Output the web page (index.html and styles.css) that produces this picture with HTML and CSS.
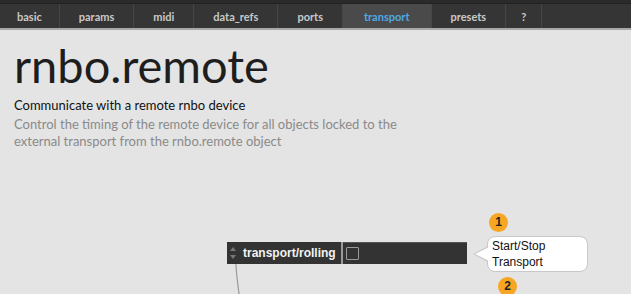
FILE: index.html
```html
<!DOCTYPE html>
<html>
<head>
<meta charset="utf-8">
<link rel="stylesheet" href="styles.css">
</head>
<body>
<div class="topstrip"></div>
<nav class="tabs">
  <div class="tab first">basic</div>
  <div class="tab">params</div>
  <div class="tab">midi</div>
  <div class="tab">data_refs</div>
  <div class="tab">ports</div>
  <div class="tab active">transport</div>
  <div class="tab">presets</div>
  <div class="tab help">?</div>
</nav>
<main class="content">
  <h1 class="title">rnbo.remote</h1>
  <p class="subtitle">Communicate with a remote rnbo device</p>
  <p class="desc">Control the timing of the remote device for all objects locked to the external transport from the rnbo.remote object</p>
  <div class="canvas">
    <svg class="cable" width="40" height="40" viewBox="0 0 40 40"><path d="M10 0 C 10 12, 12 20, 14 40" fill="none" stroke="#9a9a9a" stroke-width="1.2"/></svg>
    <div class="node">
      <div class="msg">
        <svg class="arrows" width="8" height="14" viewBox="0 0 8 14"><path d="M4 1 L7 5 L1 5 Z" fill="#777"/><path d="M4 13 L7 9 L1 9 Z" fill="#777"/></svg>
        <span>transport/rolling</span>
      </div>
      <div class="toggle"><span class="box"></span></div>
    </div>
    <div class="badge b1">1</div>
    <div class="bubble">Start/Stop<br>Transport</div>
    <div class="badge b2">2</div>
  </div>
</main>
</body>
</html>
```
FILE: styles.css
```css
html, body { margin: 0; padding: 0; }
body {
  width: 631px; height: 294px; overflow: hidden;
  background: #e4e4e4;
  font-family: Lato, "Open Sans", sans-serif;
}
.topstrip { height: 3px; background: #2a2a2a; border-bottom: 1px solid #222; }
.tabs {
  display: flex; height: 24px; background: #353535;
  border-bottom: 2px solid #a8a8a8;
}
.tab {
  padding: 0 19px; border-right: 1px solid #464646;
  color: #c9c9c9; font-weight: 700; font-size: 11px;
  display: flex; align-items: center; justify-content: center;
}
.tab.first { padding: 0 17px; }
.tab.help { padding: 0 15px; }
.tab.active { background: #4a4a4a; color: #4fa9e3; padding: 0 21px; }
.content { padding: 0 14px; }
.title {
  margin: 7px 0 0; font-weight: 400; font-size: 47px; line-height: 56px;
  color: #1e1e1e; letter-spacing: 0;
}
.subtitle { margin: 4px 0 0; font-size: 13px; line-height: 17px; color: #111; }
.desc { margin: 2px 0 0; font-size: 13px; line-height: 17px; color: #8a8a8a; width: 400px; }
.canvas { position: relative; height: 140px; }
.node {
  position: absolute; left: 213px; top: 92px; width: 240px; height: 22px;
  display: flex; background: #333;
}
.msg {
  display: flex; align-items: center; gap: 6px; padding: 0 5px 0 2px;
  border-right: 2px solid #9a9a9a;
  font-family: "Liberation Sans", Arial, sans-serif; font-weight: 700; font-size: 12px; color: #f2f2f2;
}
.toggle { flex: 1; display: flex; align-items: center; padding-left: 3px; border-top: 1px solid #555; }
.box { width: 11px; height: 11px; border: 1px solid #9a9a9a; border-radius: 1px; }
.cable { position: absolute; left: 212px; top: 113px; }
.badge {
  position: absolute; width: 19px; height: 19px; border-radius: 50%;
  background: #f6a623; color: #222; font-family: "Liberation Sans", Arial, sans-serif;
  font-weight: 700; font-size: 12px; line-height: 19px; text-align: center;
}
.b1 { left: 475px; top: 63px; }
.b2 { left: 484px; top: 127px; }
.bubble {
  position: absolute; left: 473px; top: 86px; width: 89px; height: 34px;
  padding: 0 6px 0 4px; background: #fff; border: 1px solid #c8c8c8; border-radius: 8px;
  font-family: "Liberation Sans", Arial, sans-serif; font-size: 12px; line-height: 16px; color: #111;
  display: flex; align-items: center;
}
.bubble::before {
  content: ""; position: absolute; left: -15px; top: 9px;
  border-style: solid; border-width: 8px 15px 8px 0;
  border-color: transparent #c8c8c8 transparent transparent;
}
.bubble::after {
  content: ""; position: absolute; left: -13px; top: 10px;
  border-style: solid; border-width: 7px 14px 7px 0;
  border-color: transparent #fff transparent transparent;
}
```
